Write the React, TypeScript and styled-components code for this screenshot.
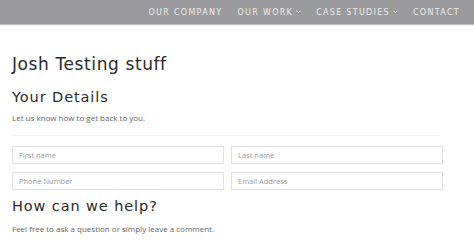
import React from "react";
import styled, { createGlobalStyle } from "styled-components";

const Global = createGlobalStyle`
  html, body { margin: 0; padding: 0; background: #fff; }
  body { font-family: "Open Sans", sans-serif; }
`;

const Header = styled.header`
  height: 24px;
  background: #9b9b9d;
  box-shadow: 0 1px 1px rgba(0,0,0,0.25);
  display: flex;
  align-items: center;
  justify-content: flex-end;
  padding-right: 14px;
`;

const Nav = styled.nav`
  display: flex;
  align-items: center;
  gap: 15px;
`;

const NavItem = styled.a`
  font-family: "DejaVu Sans", sans-serif;
  font-size: 8px;
  letter-spacing: 1.3px;
  color: #ececec;
  text-transform: uppercase;
  display: flex;
  align-items: center;
  gap: 3px;
  white-space: nowrap;
`;

const Chevron = () => (
  <svg width="5" height="4" viewBox="0 0 5 4">
    <path d="M0.6 0.8 L2.5 2.8 L4.4 0.8" fill="none" stroke="#ececec" strokeWidth="0.9" />
  </svg>
);

const Main = styled.main`
  padding: 0 31px 0 12px;
`;

const Title = styled.h1`
  margin: 0;
  padding-top: 28px;
  font-family: "DejaVu Sans", sans-serif;
  font-weight: 400;
  font-size: 17px;
  line-height: 24px;
  letter-spacing: 0.6px;
  color: #2a2a2a;
`;

const Heading = styled.h2<{ $top: number }>`
  margin: ${(p) => p.$top}px 0 0;
  font-family: "DejaVu Sans", sans-serif;
  font-weight: 400;
  font-size: 14.5px;
  line-height: 20px;
  letter-spacing: 0.9px;
  color: #2a2a2a;
`;

const Lead = styled.p<{ $top: number }>`
  margin: ${(p) => p.$top}px 0 0;
  font-size: 8px;
  line-height: 12px;
  color: #666;
`;

const Divider = styled.hr`
  margin: 11px 3px 10px 0;
  border: 0;
  border-top: 1px solid #f2f2f2;
`;

const Grid = styled.div`
  display: grid;
  grid-template-columns: 1fr 1fr;
  column-gap: 7px;
  row-gap: 8px;
`;

const Field = styled.div`
  height: 16px;
  border: 1px solid #e2e2e2;
  display: flex;
  align-items: center;
  padding-left: 6px;
  font-size: 7.5px;
  color: #9a9a9a;
`;

export default function App() {
  return (
    <>
      <Global />
      <Header>
        <Nav>
          <NavItem>Our Company</NavItem>
          <NavItem>Our Work <Chevron /></NavItem>
          <NavItem>Case Studies <Chevron /></NavItem>
          <NavItem>Contact</NavItem>
        </Nav>
      </Header>
      <Main>
        <Title>Josh Testing stuff</Title>
        <Heading $top={11}>Your Details</Heading>
        <Lead $top={5}>Let us know how to get back to you.</Lead>
        <Divider />
        <Grid>
          <Field>First name</Field>
          <Field>Last name</Field>
          <Field>Phone Number</Field>
          <Field>Email Address</Field>
        </Grid>
        <Heading $top={6}>How can we help?</Heading>
        <Lead $top={7}>Feel free to ask a question or simply leave a comment.</Lead>
      </Main>
    </>
  );
}
